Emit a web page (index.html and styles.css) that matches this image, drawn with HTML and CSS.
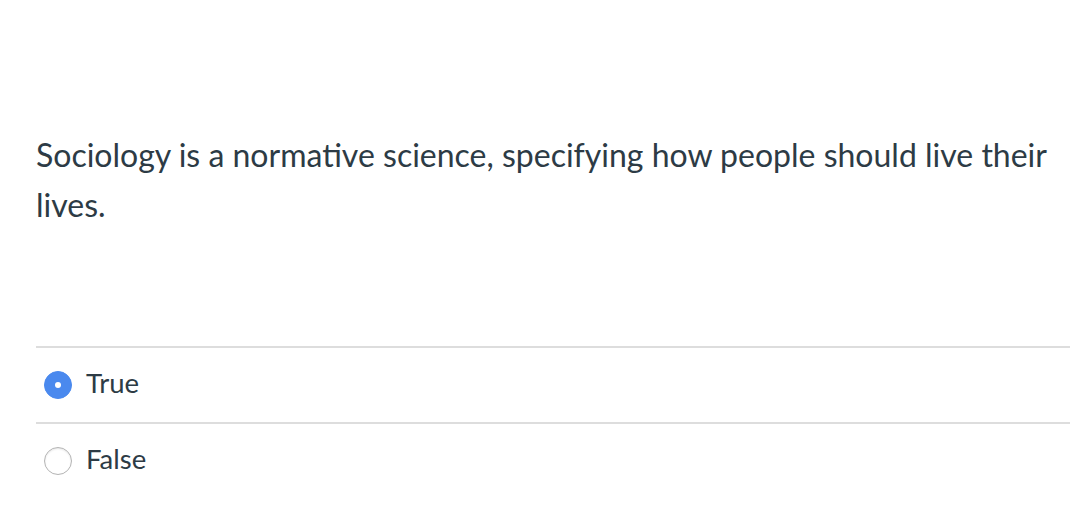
FILE: index.html
```html
<!DOCTYPE html>
<html lang="en">
<head>
  <meta charset="UTF-8" />
  <title>Question</title>
  <link rel="stylesheet" href="styles.css">
</head>
<body>
  <div class="question">
    <div class="question-text">
      <p>Sociology is a normative science, specifying how people should live their lives.</p>
    </div>
    <div class="answers">
      <label class="answer">
        <input type="radio" name="q1" checked>
        <span class="radio"></span>
        <span class="answer-label">True</span>
      </label>
      <label class="answer">
        <input type="radio" name="q1">
        <span class="radio"></span>
        <span class="answer-label">False</span>
      </label>
    </div>
  </div>
</body>
</html>
```

FILE: styles.css
```css
body {
  margin: 0;
  background-color: #fff;
  font-family: Lato, "Open Sans", sans-serif;
  color: #2d3b45;
}
.question {
  padding: 0 14px 0 36px;
}
.question-text {
  padding-top: 130px;
  padding-bottom: 116px;
}
.question-text p {
  margin: 0;
  font-size: 32px;
  line-height: 50px;
}
.answers {
  border-top: 2px solid #dddddd;
}
.answer {
  display: flex;
  align-items: center;
  height: 74px;
  border-bottom: 2px solid #dddddd;
  cursor: pointer;
}
.answer:last-child {
  border-bottom: none;
}
.answer input {
  display: none;
}
.radio {
  width: 26px;
  height: 26px;
  border-radius: 50%;
  border: 1px solid #b4b4b4;
  box-shadow: inset 0 1px 2px rgba(0, 0, 0, 0.1);
  margin-left: 8px;
  margin-right: 14px;
  position: relative;
  background: #fff;
}
.answer input:checked + .radio {
  background-color: #4a89ee;
  border-color: #4a89ee;
  box-shadow: none;
}
.answer input:checked + .radio::after {
  content: "";
  position: absolute;
  left: 10px;
  top: 10px;
  width: 6px;
  height: 6px;
  border-radius: 50%;
  background: #fff;
}
.answer-label {
  font-size: 27.5px;
  padding-bottom: 5px;
}
```
